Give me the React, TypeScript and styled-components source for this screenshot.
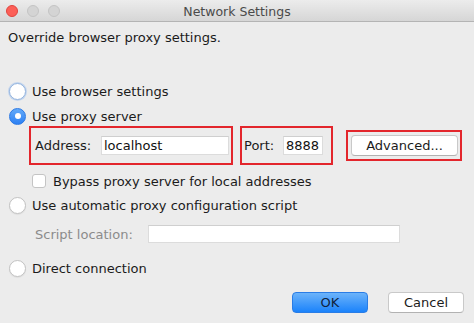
import React from "react";
import styled, { createGlobalStyle, css } from "styled-components";

const Global = createGlobalStyle`
  html, body { margin: 0; padding: 0; background: #ececec; }
  body { font-family: "DejaVu Sans", "Liberation Sans", sans-serif; color: #1b1b1b; }
`;

const Window = styled.div`
  width: 474px;
  height: 323px;
  background: #ececec;
  display: flex;
  flex-direction: column;
  overflow: hidden;
`;

const TitleBar = styled.div`
  height: 22px;
  box-sizing: border-box;
  border-bottom: 1px solid #b4b4b4;
  background: linear-gradient(#ececec, #d6d6d6);
  position: relative;
  display: flex;
  align-items: center;
  justify-content: center;
`;

const Lights = styled.div`
  position: absolute;
  left: 6px;
  top: 5px;
  display: flex;
  gap: 9px;
`;

const Light = styled.span<{ $red?: boolean }>`
  width: 12px;
  height: 12px;
  box-sizing: border-box;
  border-radius: 50%;
  background: ${(p) => (p.$red ? "#fc5f57" : "#d4d4d4")};
  border: 1px solid ${(p) => (p.$red ? "#e0443e" : "#c4c4c4")};
`;

const Title = styled.div`
  font-size: 12.5px;
  color: #4a4a4a;
  margin-top: 1px;
`;

const Body = styled.div`
  display: flex;
  flex-direction: column;
  padding: 8px 10px 0 8px;
  font-size: 13px;
`;

const Intro = styled.div`
  height: 16px;
  line-height: 16px;
  margin-bottom: 35px;
`;

const Row = styled.div<{ $gap?: number; $indent?: number; $h?: number }>`
  display: flex;
  align-items: center;
  height: ${(p) => p.$h ?? 20}px;
  margin-top: ${(p) => p.$gap ?? 0}px;
  padding-left: ${(p) => p.$indent ?? 0}px;
  white-space: nowrap;
`;

const Radio = styled.span<{ $checked?: boolean; $focus?: boolean }>`
  width: 17px;
  height: 17px;
  box-sizing: border-box;
  border-radius: 50%;
  margin-left: 1px;
  margin-right: 6px;
  flex: none;
  display: flex;
  align-items: center;
  justify-content: center;
  ${(p) =>
    p.$checked
      ? css`
          background: linear-gradient(#63aaf9, #2d80f3);
          border: 1px solid #2a78e4;
          &::after {
            content: "";
            width: 6px;
            height: 6px;
            border-radius: 50%;
            background: #fff;
          }
        `
      : css`
          background: #fff;
          border: 1px solid ${p.$focus ? "#93b3dd" : "#c2c2c2"};
          box-shadow: ${p.$focus ? "0 0 0 1px #c3d5ee" : "0 1px 1px rgba(0,0,0,0.06)"};
        `}
`;

const Check = styled.span`
  width: 14px;
  height: 14px;
  box-sizing: border-box;
  border-radius: 3px;
  background: #fff;
  border: 1px solid #c4c4c4;
  margin-left: 24px;
  margin-right: 7px;
  flex: none;
`;

const ProxyRow = styled.div`
  display: flex;
  align-items: center;
  margin-left: 21px;
  height: 39px;
`;

const Highlight = styled.div<{ $w: number; $h: number; $ml?: number; $pl: number }>`
  width: ${(p) => p.$w}px;
  height: ${(p) => p.$h}px;
  margin-left: ${(p) => p.$ml ?? 0}px;
  box-sizing: border-box;
  border: 2px solid #e3262c;
  display: flex;
  align-items: center;
  padding-left: ${(p) => p.$pl}px;
`;

const Label = styled.span<{ $muted?: boolean; $w?: number }>`
  color: ${(p) => (p.$muted ? "#8b8b8b" : "#1b1b1b")};
  width: ${(p) => (p.$w ? `${p.$w}px` : "auto")};
  flex: none;
  white-space: nowrap;
`;

const TextField = styled.div<{ $w: number; $h?: number }>`
  width: ${(p) => p.$w}px;
  height: ${(p) => p.$h ?? 19}px;
  box-sizing: border-box;
  background: #fff;
  border: 1px solid #dcdcdc;
  border-top-color: #cfcfcf;
  display: flex;
  align-items: center;
  padding-left: 2px;
  font-size: 13px;
  color: #111;
`;

const PushButton = styled.div<{ $w: number; $primary?: boolean }>`
  width: ${(p) => p.$w}px;
  height: 21px;
  box-sizing: border-box;
  border-radius: 4px;
  display: flex;
  align-items: center;
  justify-content: center;
  font-size: 13px;
  color: #1b1b1b;
  ${(p) =>
    p.$primary
      ? css`
          background: linear-gradient(#6cb3fa, #1b83fb);
          border: 1px solid #2a7de6;
          color: #10233d;
        `
      : css`
          background: #fff;
          border: 1px solid #c9c9c9;
          border-bottom-color: #b2b2b2;
        `}
`;

const ButtonBar = styled.div`
  display: flex;
  justify-content: flex-end;
  gap: 20px;
  margin-top: 14px;
`;

export default function App() {
  return (
    <>
      <Global />
      <Window>
        <TitleBar>
          <Lights>
            <Light $red />
            <Light />
            <Light />
          </Lights>
          <Title>Network Settings</Title>
        </TitleBar>
        <Body>
          <Intro>Override browser proxy settings.</Intro>
          <Row>
            <Radio $focus />
            Use browser settings
          </Row>
          <Row $gap={5}>
            <Radio $checked />
            Use proxy server
          </Row>
          <ProxyRow>
            <Highlight $w={204} $h={39} $pl={4}>
              <Label $w={66}>Address:</Label>
              <TextField $w={128}>localhost</TextField>
            </Highlight>
            <Highlight $w={93} $h={39} $ml={7} $pl={2}>
              <Label $w={39}>Port:</Label>
              <TextField $w={40}>8888</TextField>
            </Highlight>
            <Highlight $w={116} $h={31} $ml={13} $pl={3}>
              <PushButton $w={107}>Advanced...</PushButton>
            </Highlight>
          </ProxyRow>
          <Row $gap={6}>
            <Check />
            Bypass proxy server for local addresses
          </Row>
          <Row $gap={4}>
            <Radio />
            Use automatic proxy configuration script
          </Row>
          <Row $gap={9} $indent={27}>
            <Label $muted $w={113}>Script location:</Label>
            <TextField $w={252} $h={18} />
          </Row>
          <Row $gap={14}>
            <Radio />
            Direct connection
          </Row>
          <ButtonBar>
            <PushButton $w={76} $primary>OK</PushButton>
            <PushButton $w={76}>Cancel</PushButton>
          </ButtonBar>
        </Body>
      </Window>
    </>
  );
}
